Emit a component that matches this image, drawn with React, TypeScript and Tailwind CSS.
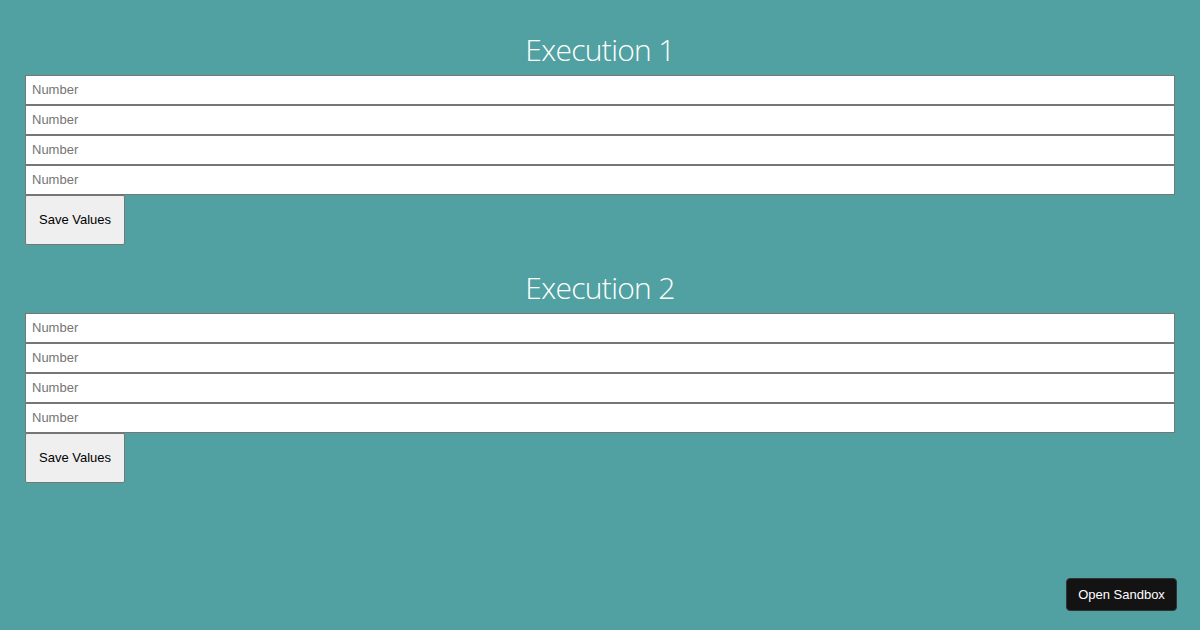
import React from "react";

function Execution({ title }: { title: string }) {
  return (
    <section>
      <h1 className="h-[50px] flex items-center justify-center text-[30px] tracking-[-0.7px] font-light text-white leading-none font-['Open_Sans',sans-serif]">
        {title}
      </h1>
      <div className="flex flex-col">
        {[1, 2, 3, 4].map((i) => (
          <input
            key={i}
            type="number"
            placeholder="Number"
            className="h-[30px] w-full bg-white border border-[#767676] px-[6px] pb-[2px] text-[13px] text-black placeholder:text-[#757575] font-['Liberation_Sans',Arial,sans-serif] outline-none"
          />
        ))}
      </div>
      <button className="h-[50px] w-[100px] bg-[#efefef] border border-[#767676] rounded-[2px] text-[13px] text-black font-['Liberation_Sans',Arial,sans-serif]">
        Save Values
      </button>
    </section>
  );
}

export default function App() {
  return (
    <div className="min-h-[630px] bg-[#51a1a2] pt-[25px] pl-[25px] pr-[25px] relative">
      <Execution title="Execution 1" />
      <div className="mt-[18px]">
        <Execution title="Execution 2" />
      </div>
      <button className="absolute right-[23px] bottom-[19px] h-[33px] w-[111px] bg-[#131313] border border-[#333] rounded-[4px] text-white text-[13px] font-['Liberation_Sans',Arial,sans-serif]">
        Open Sandbox
      </button>
    </div>
  );
}
